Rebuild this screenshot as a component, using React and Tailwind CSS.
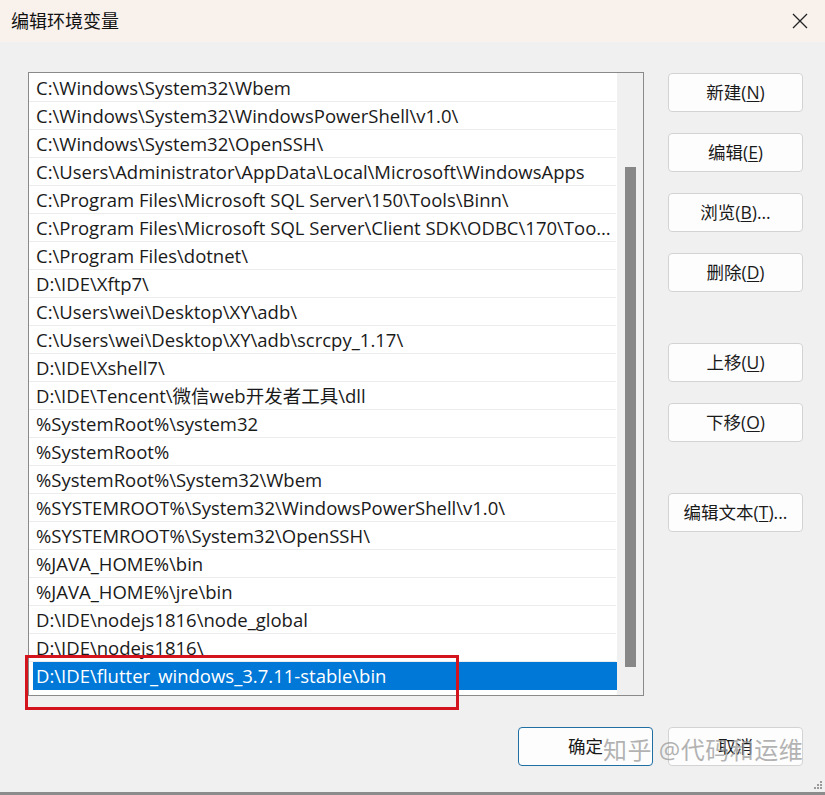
import React from "react";

const paths = [
  "C:\\Windows\\System32\\Wbem",
  "C:\\Windows\\System32\\WindowsPowerShell\\v1.0\\",
  "C:\\Windows\\System32\\OpenSSH\\",
  "C:\\Users\\Administrator\\AppData\\Local\\Microsoft\\WindowsApps",
  "C:\\Program Files\\Microsoft SQL Server\\150\\Tools\\Binn\\",
  "C:\\Program Files\\Microsoft SQL Server\\Client SDK\\ODBC\\170\\Tools\\Binn\\",
  "C:\\Program Files\\dotnet\\",
  "D:\\IDE\\Xftp7\\",
  "C:\\Users\\wei\\Desktop\\XY\\adb\\",
  "C:\\Users\\wei\\Desktop\\XY\\adb\\scrcpy_1.17\\",
  "D:\\IDE\\Xshell7\\",
  "D:\\IDE\\Tencent\\微信web开发者工具\\dll",
  "%SystemRoot%\\system32",
  "%SystemRoot%",
  "%SystemRoot%\\System32\\Wbem",
  "%SYSTEMROOT%\\System32\\WindowsPowerShell\\v1.0\\",
  "%SYSTEMROOT%\\System32\\OpenSSH\\",
  "%JAVA_HOME%\\bin",
  "%JAVA_HOME%\\jre\\bin",
  "D:\\IDE\\nodejs1816\\node_global",
  "D:\\IDE\\nodejs1816\\",
  "D:\\IDE\\flutter_windows_3.7.11-stable\\bin",
];

const font = { fontFamily: "'Open Sans', 'Noto Sans CJK SC', sans-serif" };

const Btn = ({ label, keyChar, tail = "", primary = false }) => (
  <button
    className={`w-[135px] h-[39px] rounded-[4px] bg-[#fdfdfd] text-[17.5px] text-[#1a1a1a] flex items-center justify-center border ${
      primary ? "border-[#1f6fa3]" : "border-[#d3d3d3]"
    }`}
  >
    {label}
    {keyChar && (
      <span>
        (<span className="underline underline-offset-2">{keyChar}</span>)
      </span>
    )}
    {tail}
  </button>
);

const App = () => {
  return (
    <div
      className="relative w-[825px] h-[795px] bg-[#f0f0f0] flex flex-col overflow-hidden border-b-[3px] border-[#8c8c8c]"
      style={font}
    >
      <div className="h-[42px] bg-[#f8f1ec] flex items-center justify-between pl-[11px] pr-[16px] shrink-0">
        <span className="text-[18px] text-[#111]">编辑环境变量</span>
        <svg width="18" height="18" viewBox="0 0 18 18">
          <path d="M2 2 L16 16 M16 2 L2 16" stroke="#222" strokeWidth="1.3" fill="none" />
        </svg>
      </div>

      <div className="flex pl-[28px] pt-[30px]">
        <div className="w-[616px] h-[624px] border border-[#8a8a8a] bg-white flex">
          <div className="w-[588px] pt-[1px] flex flex-col">
            {paths.map((p, i) => {
              const sel = i === paths.length - 1;
              return (
                <div
                  key={i}
                  className={`h-[28px] flex items-center border-b ${
                    sel
                      ? "bg-[#0078d7] text-white border-[#0078d7] ml-[4px] pl-[3px]"
                      : "text-[#1a1a1a] border-[#ececec] pl-[7px] mr-[1px]"
                  }`}
                >
                  <span className="text-[18.5px] whitespace-nowrap overflow-hidden text-ellipsis pr-[4px]">{p}</span>
                </div>
              );
            })}
          </div>
          <div className="flex-1 bg-[#f0f0f0] pt-[94px] flex justify-center">
            <div className="w-[11px] h-[500px] bg-[#878787]" />
          </div>
        </div>

        <div className="ml-[24px] pt-[1px] flex flex-col">
          <div className="flex flex-col gap-[21px]">
            <Btn label="新建" keyChar="N" />
            <Btn label="编辑" keyChar="E" />
            <Btn label="浏览" keyChar="B" tail="..." />
            <Btn label="删除" keyChar="D" />
          </div>
          <div className="flex flex-col gap-[21px] mt-[51px]">
            <Btn label="上移" keyChar="U" />
            <Btn label="下移" keyChar="O" />
          </div>
          <div className="mt-[51px]">
            <Btn label="编辑文本" keyChar="T" tail="..." />
          </div>
        </div>
      </div>

      <div className="flex justify-end gap-[15px] pr-[22px] mt-[31px]">
        <Btn label="确定" primary />
        <Btn label="取消" />
      </div>

      <div className="absolute left-[25px] top-[655px] w-[434px] h-[55px] border-[3px] border-[#d4141c]" />

      <div className="absolute left-[603px] top-[732px] text-[24px] text-[#9a9a9a]/75 tracking-[0.5px] whitespace-nowrap">
        知乎 @代码和运维
      </div>

      <svg className="absolute right-[2px] bottom-[2px]" width="10" height="10" viewBox="0 0 10 10">
        <g fill="#9a9a9a">
          <rect x="7" y="1" width="2" height="2" />
          <rect x="4" y="4" width="2" height="2" />
          <rect x="7" y="4" width="2" height="2" />
          <rect x="1" y="7" width="2" height="2" />
          <rect x="4" y="7" width="2" height="2" />
          <rect x="7" y="7" width="2" height="2" />
        </g>
      </svg>
    </div>
  );
};

export default App;
